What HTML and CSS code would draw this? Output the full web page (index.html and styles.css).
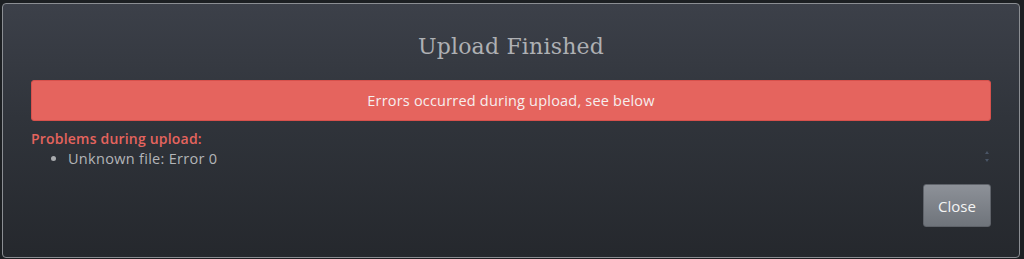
FILE: index.html
```html
<!DOCTYPE html>
<html>
<head>
<meta charset="utf-8">
<link rel="stylesheet" href="styles.css">
</head>
<body>
<div class="modal">
  <h1 class="title">Upload Finished</h1>
  <div class="alert">Errors occurred during upload, see below</div>
  <div class="problems">
    <div class="problems-body">
      <div class="problems-head">Problems during upload:</div>
      <ul class="problem-list">
        <li>Unknown file: Error 0</li>
      </ul>
    </div>
    <div class="scroll-arrows">
      <span class="arrow up"></span>
      <span class="arrow down"></span>
    </div>
  </div>
  <div class="footer">
    <button class="btn-close">Close</button>
  </div>
</div>
</body>
</html>
```
FILE: styles.css
```css
html, body {
  margin: 0;
  padding: 0;
}
body {
  background: #1c1f22;
  width: 1024px;
  height: 259px;
  padding: 3px 0 0 2px;
  box-sizing: border-box;
  font-family: "Open Sans", "Lato", sans-serif;
}
.modal {
  width: 1018px;
  height: 255px;
  box-sizing: border-box;
  border: 1px solid #8b8e93;
  border-radius: 4px;
  background: linear-gradient(to bottom, #3c4049 0%, #30343b 45%, #25282d 100%);
  padding: 0 28px 0 28px;
  display: flex;
  flex-direction: column;
}
.title {
  margin: 26px 0 0 0;
  height: 50px;
  text-align: center;
  font-family: "DejaVu Serif", "Liberation Serif", serif;
  font-weight: normal;
  font-size: 22px;
  line-height: 34px;
  color: #aeb0b3;
  letter-spacing: 0.2px;
}
.alert {
  height: 41px;
  box-sizing: border-box;
  background: #e5645e;
  border: 1px solid #d7514c;
  border-radius: 3px;
  color: #f6eeee;
  font-size: 14.5px;
  line-height: 39px;
  text-align: center;
  letter-spacing: 0.2px;
}
.problems {
  display: flex;
  justify-content: space-between;
  margin-top: 8px;
}
.problems-head {
  color: #e5645e;
  font-size: 14px;
  font-weight: 600;
  line-height: 19px;
  letter-spacing: 0.2px;
}
.problem-list {
  margin: 0;
  padding: 0 0 0 37px;
  color: #b3b5b8;
  font-size: 14.5px;
  line-height: 21px;
  letter-spacing: 0.3px;
}
.problem-list li::marker {
  color: #a9abae;
}
.scroll-arrows {
  display: flex;
  flex-direction: column;
  gap: 5px;
  margin-top: 22px;
  margin-right: 2px;
}
.arrow {
  width: 0;
  height: 0;
  border-left: 2px solid transparent;
  border-right: 2px solid transparent;
}
.arrow.up {
  border-bottom: 3px solid #4a5566;
}
.arrow.down {
  border-top: 3px solid #4a5566;
}
.footer {
  display: flex;
  justify-content: flex-end;
  margin-top: 15px;
}
.btn-close {
  width: 68px;
  height: 43px;
  box-sizing: border-box;
  border: 1px solid #5f636a;
  border-radius: 3px;
  background: linear-gradient(to bottom, #8d9198, #6f747b);
  color: #f4f4f4;
  font-family: "Open Sans", "Lato", sans-serif;
  font-size: 15px;
  padding: 0;
}
```
